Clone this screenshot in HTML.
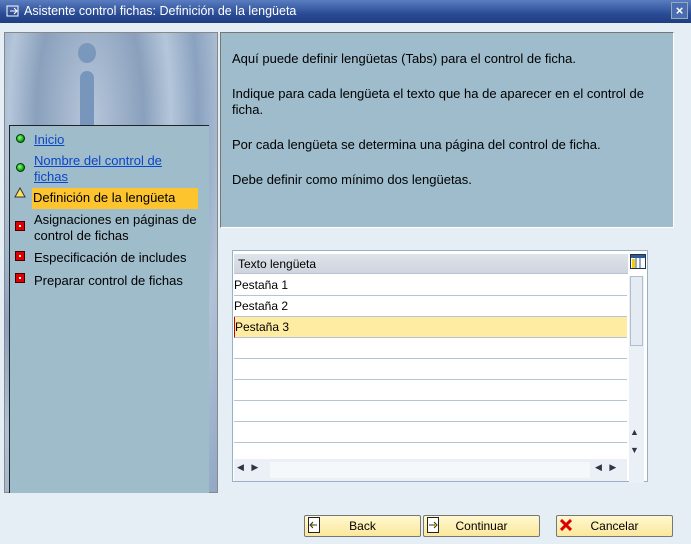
<!DOCTYPE html>
<html><head><meta charset="utf-8"><style>
*{margin:0;padding:0;box-sizing:border-box}
body{width:691px;height:544px;background:#e6eef5;font-family:"Liberation Sans",Tahoma,sans-serif;font-size:12px;color:#000;position:relative;overflow:hidden}
.abs{position:absolute}
#title{left:0;top:0;width:691px;height:23px;background:linear-gradient(#5a7dc0,#2a4c96 60%,#1f3d80);color:#fff;font-size:12.5px;line-height:23px;padding-left:24px}
#img{left:4px;top:32px;width:214px;height:461px;border:1px solid #888;background:radial-gradient(ellipse at 85px 90px,#b8c8dc 0,#8aa0bc 30%,#b4c6da 45%,#8aa2c0 60%,#b0c2d6 75%,#90a8c4 100%);}
#nav{left:9px;top:125px;width:200px;height:368px;background:#9fbccb;border-left:1px solid #222;border-top:1px solid #222}
.it{position:absolute;left:24px;font-size:13px;line-height:16px}
.lk{color:#0a46c8;text-decoration:underline}
.dot{position:absolute;left:6px;width:9px;height:9px;border-radius:50%;background:radial-gradient(circle at 40% 40%,#8f8,#090 70%);border:1px solid #030}
.sq{position:absolute;left:5px;width:10px;height:10px;background:#d00;border:1px solid #400}
.sq::after{content:"";position:absolute;left:3px;top:3px;width:2px;height:2px;background:#fff}
#info{left:220px;top:32px;width:454px;height:196px;background:#9ebccb;border:1px solid #777;border-right-color:#fff;border-bottom-color:#fff}
#info p{position:absolute;left:11px;font-size:13px;line-height:16px}
#tbl{left:232px;top:250px;width:416px;height:232px;border:1px solid #9ab0c8;background:#fff}
.row{position:absolute;left:1px;width:393px;height:21px;border-bottom:1px solid #b4c4d6;line-height:20px;font-size:12px;padding-left:0}
.btn{position:absolute;top:515px;height:22px;border:1px solid #777;background:linear-gradient(#fff8d0,#fbe89a);font-size:12px;line-height:20px;text-align:center;border-radius:2px}
</style></head><body>
<div id="title" class="abs">Asistente control fichas: Definición de la lengüeta</div>
<svg class="abs" style="left:6px;top:5px" width="14" height="12"><rect x="1" y="1" width="11" height="10" fill="none" stroke="#fff"/><path d="M4 6h7M8 3l3 3-3 3" stroke="#fff" fill="none"/></svg>
<div class="abs" style="left:671px;top:2px;width:17px;height:17px;border:1px solid #9ab;background:#4a6cb0;color:#fff;font-size:13px;line-height:15px;text-align:center;font-weight:bold">×</div>
<div id="img" class="abs"><div style="position:absolute;left:73px;top:10px;width:18px;height:20px;border-radius:50%;background:#7a98bc"></div><div style="position:absolute;left:75px;top:38px;width:14px;height:62px;border-radius:7px;background:#7896bc"></div></div>
<div id="nav" class="abs">
<div class="dot" style="top:8px"></div><div class="it lk" style="top:6px">Inicio</div>
<div class="dot" style="top:37px"></div><div class="it lk" style="top:27px">Nombre del control de<br>fichas</div>
<svg style="position:absolute;left:4px;top:61px" width="12" height="11"><path d="M6 1L11 10H1Z" fill="#ffe060" stroke="#333"/></svg>
<div class="it" style="top:62px;left:22px;width:166px;height:21px;background:#fdc42e;padding:2px 0 0 1px">Definición de la lengüeta</div>
<div class="sq" style="top:95px"></div><div class="it" style="top:86px">Asignaciones en páginas de<br>control de fichas</div>
<div class="sq" style="top:125px"></div><div class="it" style="top:124px">Especificación de includes</div>
<div class="sq" style="top:147px"></div><div class="it" style="top:147px">Preparar control de fichas</div>
</div>
<div id="info" class="abs">
<p style="top:18px">Aquí puede definir lengüetas (Tabs) para el control de ficha.</p>
<p style="top:53px">Indique para cada lengüeta el texto que ha de aparecer en el control de<br>ficha.</p>
<p style="top:104px">Por cada lengüeta se determina una página del control de ficha.</p>
<p style="top:139px">Debe definir como mínimo dos lengüetas.</p>
</div>
<div id="tbl" class="abs">
<div style="position:absolute;left:1px;top:3px;width:394px;height:20px;background:linear-gradient(#dfe3ea,#cfd5de);border-bottom:1px solid #b8c2d0;line-height:20px;padding-left:4px">Texto lengüeta</div>
<svg style="position:absolute;left:397px;top:3px" width="16" height="15"><rect x="0.5" y="0.5" width="15" height="14" fill="#fff" stroke="#234"/><rect x="1" y="1" width="14" height="3" fill="#2a5a9a"/><rect x="2" y="5" width="3" height="9" fill="#f5d000"/><path d="M6 4v10M10 4v10" stroke="#2a5a9a"/></svg>
<div class="row" style="top:24px">Pestaña 1</div>
<div class="row" style="top:45px">Pestaña 2</div>
<div class="row" style="top:66px;background:#ffeca3;border-left:1px solid #c00">Pestaña 3</div>
<div class="row" style="top:87px"></div>
<div class="row" style="top:108px"></div>
<div class="row" style="top:129px"></div>
<div class="row" style="top:150px"></div>
<div class="row" style="top:171px"></div>
<div style="position:absolute;left:1px;top:192px;width:393px;height:38px;background:#fff"></div>
<div style="position:absolute;left:396px;top:25px;width:15px;height:207px;background:#eaf0f6"></div>
<div style="position:absolute;left:397px;top:25px;width:13px;height:70px;background:#e4ebf3;border:1px solid #b0bfd0"></div>
<div style="position:absolute;left:397px;top:176px;font-size:9px;color:#334">▲</div>
<div style="position:absolute;left:397px;top:194px;font-size:9px;color:#334">▼</div>
<div style="position:absolute;left:1px;top:208px;width:393px;height:22px;background:#eaf0f6"></div>
<div style="position:absolute;left:37px;top:211px;width:320px;height:16px;background:#f5f8fb"></div>
<div style="position:absolute;left:4px;top:211px;font-size:9px;color:#334">◀&nbsp;&nbsp;&nbsp;▶</div>
<div style="position:absolute;left:362px;top:211px;font-size:9px;color:#334">◀&nbsp;&nbsp;&nbsp;▶</div>
</div>
<div class="btn" style="left:304px;width:117px">Back</div>
<div class="btn" style="left:423px;width:117px">Continuar</div>
<div class="btn" style="left:556px;width:117px">Cancelar</div>
<svg class="abs" style="left:308px;top:517px" width="12" height="16"><rect x="0.5" y="0.5" width="11" height="15" fill="#fff" stroke="#222"/><path d="M9 8H3M5 5L2 8l3 3" stroke="#333" fill="#ff0"/></svg>
<svg class="abs" style="left:427px;top:517px" width="12" height="16"><rect x="0.5" y="0.5" width="11" height="15" fill="#fff" stroke="#222"/><path d="M2 8h6M7 5l3 3-3 3" stroke="#333" fill="#ff0"/></svg>
<svg class="abs" style="left:560px;top:519px" width="12" height="12"><path d="M1 1L11 11M11 1L1 11" stroke="#d00" stroke-width="3"/></svg>
</body></html>
